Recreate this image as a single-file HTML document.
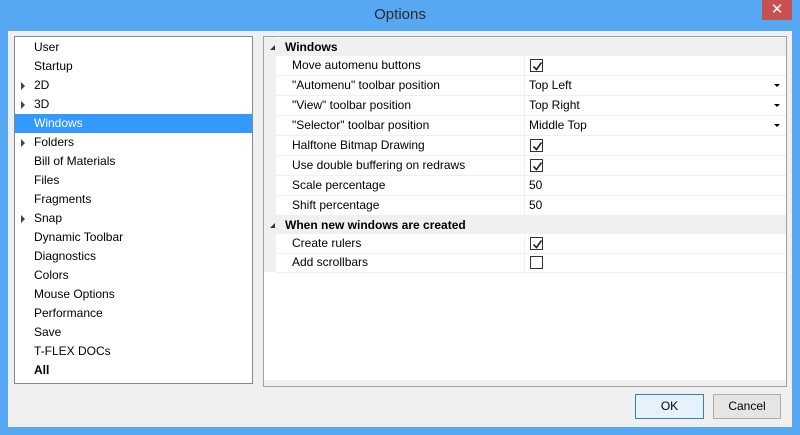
<!DOCTYPE html><html><head><style>
*{margin:0;padding:0;box-sizing:border-box}
body{width:800px;height:435px;background:#57a8f2;font-family:"Liberation Sans",sans-serif;font-size:12px;color:#000;position:relative;overflow:hidden}
.title{position:absolute;top:6px;left:0;width:800px;text-align:center;font-size:15px;color:#2a2a2a}
.close{position:absolute;left:762px;top:0;width:30px;height:20px;background:#c75050;color:#fff;text-align:center;font-size:15px;line-height:19px}
.client{position:absolute;left:8px;top:31px;width:784px;height:396px;background:#f0f0f0}
.tree{position:absolute;left:14px;top:36px;width:239px;height:348px;background:#fff;border:1px solid #828790}
.ti{position:absolute;left:0;width:237px;height:19px;line-height:19px;padding-left:19px}
.ti.sel{background:#3399ff;color:#fff}
.arr{position:absolute;left:6px;top:6px;width:0;height:0;border-left:4px solid #444;border-top:4px solid transparent;border-bottom:4px solid transparent}
.grid{position:absolute;left:263px;top:36px;width:524px;height:351px;background:#fff;border:1px solid #a0a0a0}
.gut{position:absolute;left:0;top:0;width:12px;height:235px;background:#f0f0f0}
.hdr{position:absolute;left:0;width:522px;background:#f0f0f0;font-weight:bold;padding-left:21px}
.tri{position:absolute;left:6px;top:7px;width:0;height:0;border-right:5px solid #333;border-top:5px solid transparent}
.row{position:absolute;left:12px;width:510px;height:20px;border-bottom:1px solid #f0f0f0;line-height:19px}
.row .l{position:absolute;left:16px}
.row .v{position:absolute;left:248px;top:0;height:19px;border-left:1px solid #f0f0f0;padding-left:4px;width:262px}
.cb{position:absolute;left:5px;top:3px;width:13px;height:13px;border:1px solid #333;background:#fff}
.cb svg{position:absolute;left:1px;top:1px}
.dd{position:absolute;right:6px;top:8px;border-top:3px solid #000;border-left:3px solid transparent;border-right:3px solid transparent}
.bot{position:absolute;left:0;top:343px;width:522px;height:6px;background:#f0f0f0}
.btn{position:absolute;top:394px;height:25px;line-height:23px;text-align:center;background:#e5e5e5;border:1px solid #acacac}
</style></head><body>
<div class="title">Options</div><div class="close">✕</div>
<div class="client"></div>
<div class="tree">
<div class="ti" style="top:1px">User</div>
<div class="ti" style="top:20px">Startup</div>
<div class="ti" style="top:39px"><span class="arr"></span>2D</div>
<div class="ti" style="top:58px"><span class="arr"></span>3D</div>
<div class="ti sel" style="top:77px">Windows</div>
<div class="ti" style="top:96px"><span class="arr"></span>Folders</div>
<div class="ti" style="top:115px">Bill of Materials</div>
<div class="ti" style="top:134px">Files</div>
<div class="ti" style="top:153px">Fragments</div>
<div class="ti" style="top:172px"><span class="arr"></span>Snap</div>
<div class="ti" style="top:191px">Dynamic Toolbar</div>
<div class="ti" style="top:210px">Diagnostics</div>
<div class="ti" style="top:229px">Colors</div>
<div class="ti" style="top:248px">Mouse Options</div>
<div class="ti" style="top:267px">Performance</div>
<div class="ti" style="top:286px">Save</div>
<div class="ti" style="top:305px">T-FLEX DOCs</div>
<div class="ti" style="top:324px;font-weight:bold">All</div>
</div>
<div class="grid">
<div class="gut"></div>
<div class="hdr" style="top:1px;height:18px;line-height:18px"><span class="tri"></span>Windows</div>
<div class="row" style="top:19px"><span class="l">Move automenu buttons</span><span class="v"><span class="cb"><svg width="11" height="11"><path d="M1.5 5.5L4.5 8.5L9.5 1.5" stroke="#222" stroke-width="1.6" fill="none"/></svg></span></span></div>
<div class="row" style="top:39px"><span class="l">"Automenu" toolbar position</span><span class="v">Top Left<span class="dd"></span></span></div>
<div class="row" style="top:59px"><span class="l">"View" toolbar position</span><span class="v">Top Right<span class="dd"></span></span></div>
<div class="row" style="top:79px"><span class="l">"Selector" toolbar position</span><span class="v">Middle Top<span class="dd"></span></span></div>
<div class="row" style="top:99px"><span class="l">Halftone Bitmap Drawing</span><span class="v"><span class="cb"><svg width="11" height="11"><path d="M1.5 5.5L4.5 8.5L9.5 1.5" stroke="#222" stroke-width="1.6" fill="none"/></svg></span></span></div>
<div class="row" style="top:119px"><span class="l">Use double buffering on redraws</span><span class="v"><span class="cb"><svg width="11" height="11"><path d="M1.5 5.5L4.5 8.5L9.5 1.5" stroke="#222" stroke-width="1.6" fill="none"/></svg></span></span></div>
<div class="row" style="top:139px"><span class="l">Scale percentage</span><span class="v">50</span></div>
<div class="row" style="top:159px"><span class="l">Shift percentage</span><span class="v">50</span></div>
<div class="hdr" style="top:179px;height:18px;line-height:18px"><span class="tri"></span>When new windows are created</div>
<div class="row" style="top:197px"><span class="l">Create rulers</span><span class="v"><span class="cb"><svg width="11" height="11"><path d="M1.5 5.5L4.5 8.5L9.5 1.5" stroke="#222" stroke-width="1.6" fill="none"/></svg></span></span></div>
<div class="row" style="top:216px"><span class="l">Add scrollbars</span><span class="v"><span class="cb"></span></span></div>
<div class="bot"></div>
</div>
<div class="btn" style="left:635px;width:69px;border-color:#3c7fb1;background:#e5f1fb">OK</div>
<div class="btn" style="left:713px;width:68px">Cancel</div>
</body></html>
